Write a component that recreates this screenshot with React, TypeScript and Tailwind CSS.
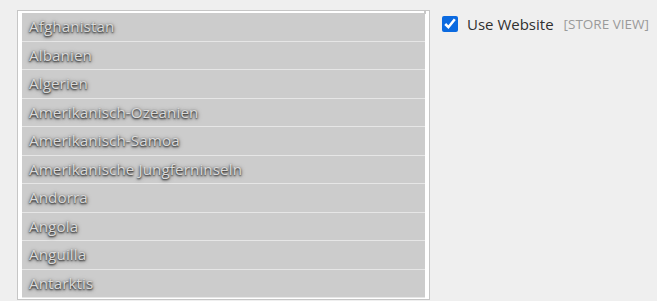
const countries = [
  "Afghanistan",
  "Albanien",
  "Algerien",
  "Amerikanisch-Ozeanien",
  "Amerikanisch-Samoa",
  "Amerikanische Jungferninseln",
  "Andorra",
  "Angola",
  "Anguilla",
  "Antarktis",
];

const App = () => {
  return (
    <div className="h-[301px] overflow-hidden bg-[#efefef] pl-[17px] pt-[10px] flex items-start gap-3 font-['Open_Sans',sans-serif]">
      <div className="relative w-[413px] h-[290px] shrink-0 border border-[#c6c6c6] bg-white pl-[4px] pr-[4px] pt-[2px] overflow-hidden">
        <div className="absolute right-[3px] top-0 w-[2px] h-[3px] bg-[#c8c8c8]" />
        {countries.map((name) => (
          <div
            key={name}
            className="h-[28.5px] flex items-center bg-[#cccccc] border-b border-[#e6e6e6] pl-[7px] text-[15.2px] tracking-[0.1px] text-[#dadada] [text-shadow:0_1px_2px_rgba(0,0,0,0.9),0_1px_4px_rgba(0,0,0,0.6)] whitespace-nowrap"
          >
            {name}
          </div>
        ))}
      </div>
      <div className="flex items-center pt-[3px]">
        <input
          type="checkbox"
          checked
          readOnly
          className="w-4 h-4 m-0 accent-[#0b6ae0]"
        />
        <span className="ml-[9px] text-[15px] text-[#303030]">Use Website</span>
        <span className="ml-[10px] text-[13.5px] text-[#9a9a9a] uppercase">[Store View]</span>
      </div>
    </div>
  );
};

export default App;
